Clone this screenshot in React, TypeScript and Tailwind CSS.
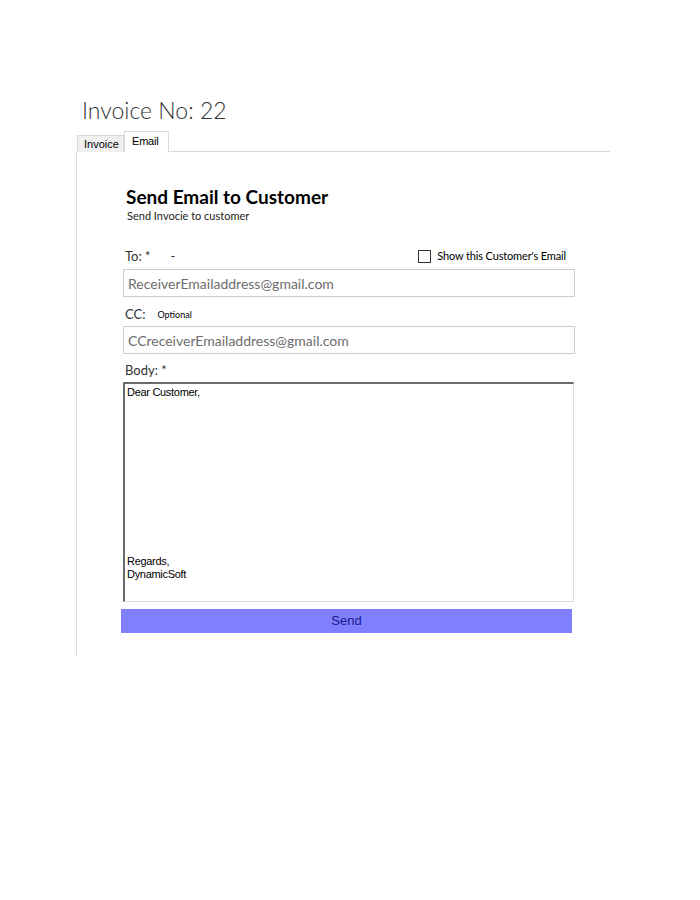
import React from "react";

const seg = { fontFamily: "Lato, 'Open Sans', sans-serif" };
const ms = { fontFamily: "'Liberation Sans', Arial, sans-serif" };

export default function App() {
  return (
    <div className="w-[700px] h-[900px] bg-white pt-[96px]" style={seg}>
      <div className="pl-[82px] text-[23px] leading-[28px] font-light text-[#333]">Invoice No: 22</div>
      <div className="ml-[76px] w-[534px] mt-[7px]">
        <div className="flex items-end h-[21px]">
          <div className="ml-px w-[47px] h-[17px] border border-b-0 border-[#d9d9d9] bg-[#f0f0f0] text-[11px] leading-[15px] pl-[6px] pt-[1px] text-black" style={ms}>
            Invoice
          </div>
          <div className="w-[45px] h-[21px] border border-b-0 border-[#d9d9d9] bg-white text-[11px] leading-[15px] pl-[7px] pt-[2px] text-black tracking-[-0.2px]" style={ms}>
            Email
          </div>
          <div className="flex-1 border-b border-[#d9d9d9]"></div>
        </div>
        <div className="border-l border-[#d9d9d9] h-[504px] pl-[46px] pt-[34px]">
          <div className="ml-[3px] text-[19px] leading-[22px] font-bold text-black">Send Email to Customer</div>
          <div className="ml-[4px] mt-[1px] text-[11px] leading-[14px] text-[#222]">Send Invocie to customer</div>
          <div className="w-[452px] mt-[25px] flex items-center h-[17px]">
            <span className="ml-[2px] text-[13px] text-[#333]">To: *</span>
            <span className="ml-[20px] text-[13px] text-[#333]">-</span>
            <div className="ml-auto mr-[9px] flex items-center gap-[6px]">
              <span className="w-[13px] h-[13px] border border-[#333] bg-white"></span>
              <span className="text-[11px] tracking-[-0.15px] text-black">Show this Customer's Email</span>
            </div>
          </div>
          <div className="w-[452px] h-[28px] mt-[4px] border border-[#cccccc] flex items-center pl-[4px] text-[14px] text-[#6d6d6d]">
            ReceiverEmailaddress@gmail.com
          </div>
          <div className="mt-[9px] h-[17px] flex items-center">
            <span className="ml-[2px] text-[13px] text-[#333]">CC:</span>
            <span className="ml-[12px] text-[9px] text-black">Optional</span>
          </div>
          <div className="w-[452px] h-[28px] mt-[3px] border border-[#cccccc] flex items-center pl-[4px] text-[14px] text-[#6d6d6d]">
            CCreceiverEmailaddress@gmail.com
          </div>
          <div className="mt-[8px] h-[17px] flex items-center">
            <span className="ml-[2px] text-[13px] text-[#333]">Body: *</span>
          </div>
          <div
            className="w-[451px] h-[220px] mt-[3px] border-t-2 border-l-2 border-r border-b border-t-[#6a6a6a] border-l-[#6a6a6a] border-r-[#dddddd] border-b-[#dddddd] pl-[2px] pt-[2px] text-[11px] leading-[13px] tracking-[-0.3px] text-black whitespace-pre"
            style={ms}
          >
            {"Dear Customer,\n\n\n\n\n\n\n\n\n\n\n\n\nRegards,\nDynamicSoft"}
          </div>
          <button
            className="block -ml-[2px] mt-[7px] w-[451px] h-[24px] bg-[#8080ff] text-[13px] text-[#1a1a8c]"
            style={ms}
          >
            Send
          </button>
        </div>
      </div>
    </div>
  );
}
